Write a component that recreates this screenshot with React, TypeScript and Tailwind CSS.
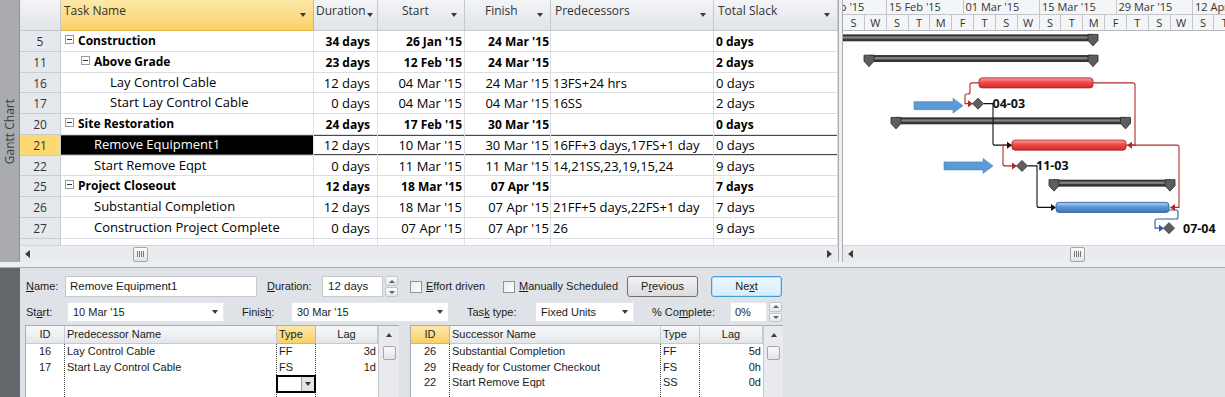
import React from "react";

type Task = {
  id: string;
  name: string;
  indent: 0 | 1 | 2;
  summary?: boolean;
  dur: string;
  start: string;
  finish: string;
  pred: string;
  slack: string;
  selected?: boolean;
};

const tasks: Task[] = [
  { id: "5", name: "Construction", indent: 0, summary: true, dur: "34 days", start: "26 Jan '15", finish: "24 Mar '15", pred: "", slack: "0 days" },
  { id: "11", name: "Above Grade", indent: 1, summary: true, dur: "23 days", start: "12 Feb '15", finish: "24 Mar '15", pred: "", slack: "2 days" },
  { id: "16", name: "Lay Control Cable", indent: 2, dur: "12 days", start: "04 Mar '15", finish: "24 Mar '15", pred: "13FS+24 hrs", slack: "0 days" },
  { id: "17", name: "Start Lay Control Cable", indent: 2, dur: "0 days", start: "04 Mar '15", finish: "04 Mar '15", pred: "16SS", slack: "2 days" },
  { id: "20", name: "Site Restoration", indent: 0, summary: true, dur: "24 days", start: "17 Feb '15", finish: "30 Mar '15", pred: "", slack: "0 days" },
  { id: "21", name: "Remove Equipment1", indent: 1, dur: "12 days", start: "10 Mar '15", finish: "30 Mar '15", pred: "16FF+3 days,17FS+1 day", slack: "0 days", selected: true },
  { id: "22", name: "Start Remove Eqpt", indent: 1, dur: "0 days", start: "11 Mar '15", finish: "11 Mar '15", pred: "14,21SS,23,19,15,24", slack: "9 days" },
  { id: "25", name: "Project Closeout", indent: 0, summary: true, dur: "12 days", start: "18 Mar '15", finish: "07 Apr '15", pred: "", slack: "7 days" },
  { id: "26", name: "Substantial Completion", indent: 1, dur: "12 days", start: "18 Mar '15", finish: "07 Apr '15", pred: "21FF+5 days,22FS+1 day", slack: "7 days" },
  { id: "27", name: "Construction Project Complete", indent: 1, dur: "0 days", start: "07 Apr '15", finish: "07 Apr '15", pred: "26", slack: "9 days" },
];

const indentPad = ["pl-[17px]", "pl-[33px]", "pl-[49px]"];

const headCols = [
  { w: "w-[253px]", label: "Task Name", pad: "pl-[3px]", yellow: true },
  { w: "w-[64px]", label: "Duration", pad: "pl-[2px]", inline: true },
  { w: "w-[87px]", label: "Start", pad: "pl-[24px]" },
  { w: "w-[86px]", label: "Finish", pad: "pl-[20px]" },
  { w: "w-[163px]", label: "Predecessors", pad: "pl-[4px]" },
  { w: "w-[124px]", label: "Total Slack", pad: "pl-[4px]" },
];

const majorTicks = ["01 Feb '15", "15 Feb '15", "01 Mar '15", "15 Mar '15", "29 Mar '15", "12 Apr '15"];
const minorTicks = ["S", "W", "S", "T", "M", "F", "T", "S", "W", "S", "T", "M", "F", "T", "S", "W", "S", "T"];

const DownArrow = () => (
  <span className="h-0 w-0 border-x-[3.5px] border-t-[4px] border-x-transparent border-t-[#3a3a3a]" />
);

function ViewBar() {
  return (
    <div className="flex w-[20px] shrink-0 justify-center border-r border-[#8e9196] bg-[#a9abae]">
      <span className="mt-[99px] h-fit rotate-180 text-[12px] text-[#3b3b3b] [writing-mode:vertical-rl]">
        Gantt Chart
      </span>
    </div>
  );
}

function HScroll({ thumbOffset, rightArrow }: { thumbOffset: string; rightArrow?: boolean }) {
  return (
    <div className="flex h-[17px] shrink-0 items-center border-t border-[#d3d6da] bg-[#e9ebee]">
      <span className="ml-[5px] h-0 w-0 border-y-[4px] border-r-[5px] border-y-transparent border-r-[#3a3a3a]" />
      <div className={`${thumbOffset} flex h-[15px] w-[15px] items-center justify-center gap-[1px] rounded-[2px] border border-[#a3a7ac] bg-gradient-to-b from-[#fbfbfb] to-[#e2e4e7]`}>
        <span className="h-[6px] w-px bg-[#777]" />
        <span className="h-[6px] w-px bg-[#777]" />
        <span className="h-[6px] w-px bg-[#777]" />
        <span className="h-[6px] w-px bg-[#777]" />
      </div>
      {rightArrow && (
        <span className="ml-auto mr-[6px] h-0 w-0 border-y-[4px] border-l-[5px] border-y-transparent border-l-[#3a3a3a]" />
      )}
    </div>
  );
}

function TaskRow({ t }: { t?: Task }) {
  const sel = t?.selected;
  const txt = t?.summary ? "font-bold text-[12px]" : "text-[13px]";
  const line = sel ? "shadow-[inset_0_1px_0_#4a4a4a,inset_0_-1px_0_#4a4a4a]" : "";
  const cell = `shrink-0 border-b border-r border-[#dcdee1] leading-[21.5px] whitespace-nowrap overflow-hidden ${line}`;
  return (
    <div className="flex h-[20.75px] shrink-0">
      <div className={`w-[41px] shrink-0 border-b border-r border-[#c9ccd0] text-center text-[12px] leading-[21.5px] text-[#333] ${sel ? "bg-[#fcd971]" : "bg-[#e5e8ec]"}`}>
        {t?.id}
      </div>
      <div className={`w-[253px] ${cell} flex items-center ${t ? indentPad[t.indent] : ""} ${txt} ${sel ? "bg-black text-white" : "bg-white text-black"}`}>
        {t?.summary && (
          <span className="-ml-[13px] mr-[4px] -mt-[3px] flex h-[9px] w-[9px] items-center justify-center border border-[#9a9a9a] bg-white">
            <span className="h-px w-[5px] bg-[#333]" />
          </span>
        )}
        {t?.name}
      </div>
      <div className={`w-[64px] ${cell} bg-white pr-[7px] text-right ${txt}`}>{t?.dur}</div>
      <div className={`w-[87px] ${cell} bg-white pr-[2px] text-right ${txt}`}>{t?.start}</div>
      <div className={`w-[86px] ${cell} bg-white pr-[1px] text-right ${txt}`}>{t?.finish}</div>
      <div className={`w-[163px] ${cell} bg-white pl-[2px] text-[13px]`}>{t?.pred}</div>
      <div className={`w-[124px] ${cell} bg-white pl-[2px] ${txt}`}>{t?.slack}</div>
    </div>
  );
}

function TaskTable() {
  return (
    <div className="flex w-[818px] shrink-0 flex-col">
      <div className="flex h-[31px] shrink-0 text-[12px] text-[#333]">
        <div className="w-[41px] shrink-0 border-b border-r border-[#c6c9cd] bg-gradient-to-b from-[#f3f4f6] to-[#e1e4e8]" />
        {headCols.map((c) => (
          <div
            key={c.label}
            className={`${c.w} ${c.pad} flex shrink-0 items-start pr-[7px] pt-[3px] border-b border-r ${
              c.yellow
                ? "border-[#e2b347] bg-gradient-to-b from-[#fde9a6] to-[#f9d068]"
                : "border-[#c6c9cd] bg-gradient-to-b from-[#f3f4f6] to-[#e1e4e8]"
            }`}
          >
            <span className="leading-[16px]">{c.label}</span>
            {!c.inline && <span className="flex-1" />}
            <span className={`mt-[10px] flex ${c.inline ? "ml-[1px]" : ""}`}>
              <DownArrow />
            </span>
          </div>
        ))}
      </div>
      <div className="flex flex-1 flex-col overflow-hidden bg-white">
        {tasks.map((t) => (
          <TaskRow key={t.id} t={t} />
        ))}
        <TaskRow />
      </div>
      <HScroll thumbOffset="ml-[103px]" rightArrow />
    </div>
  );
}

const rowY = (i: number) => 31 + 20.75 * i + 10.375;

function SummaryBar({ x1, x2, cy, leftCap = true }: { x1: number; x2: number; cy: number; leftCap?: boolean }) {
  const cap = (c: number) => (
    <polygon
      points={`${c - 5},${cy - 7} ${c + 5},${cy - 7} ${c + 5},${cy - 1} ${c},${cy + 4.5} ${c - 5},${cy - 1}`}
      fill="#5e5e5e"
      stroke="#262626"
      strokeWidth={0.8}
    />
  );
  return (
    <g>
      <rect x={x1} y={cy - 6.5} width={x2 - x1} height={6} fill="#3a3a3a" stroke="#1e1e1e" strokeWidth={0.8} />
      <rect x={x1} y={cy - 5} width={x2 - x1} height={2.2} fill="#858585" />
      {leftCap && cap(x1)}
      {cap(x2)}
    </g>
  );
}

function TaskBar({ x1, x2, cy, color }: { x1: number; x2: number; cy: number; color: "red" | "blue" }) {
  return (
    <rect
      x={x1}
      y={cy - 5}
      width={x2 - x1}
      height={10}
      rx={3}
      fill={color === "red" ? "url(#gRed)" : "url(#gBlue)"}
      stroke={color === "red" ? "#a82828" : "#2f5d98"}
      strokeWidth={0.9}
    />
  );
}

function Milestone({ cx, cy, label, gap }: { cx: number; cy: number; label: string; gap: number }) {
  return (
    <g>
      <polygon points={`${cx},${cy - 5.5} ${cx + 5.5},${cy} ${cx},${cy + 5.5} ${cx - 5.5},${cy}`} fill="#5f5f5f" stroke="#2e2e2e" strokeWidth={0.8} />
      <text x={cx + gap} y={cy + 4.5} fontSize={12.5} fontWeight={700} fill="#111" fontFamily="'Open Sans', sans-serif">
        {label}
      </text>
    </g>
  );
}

function BlueArrow({ x1, x2, cy }: { x1: number; x2: number; cy: number }) {
  const h = x2 - 10;
  return (
    <polygon
      points={`${x1},${cy - 4} ${h},${cy - 4} ${h},${cy - 7.5} ${x2},${cy} ${h},${cy + 7.5} ${h},${cy + 4} ${x1},${cy + 4}`}
      fill="#5b9bd5"
      stroke="#4a84bd"
      strokeWidth={0.6}
    />
  );
}

const headR = (x: number, y: number, c: string) => (
  <polygon points={`${x - 5},${y - 3.5} ${x},${y} ${x - 5},${y + 3.5}`} fill={c} />
);
const headL = (x: number, y: number, c: string) => (
  <polygon points={`${x + 5},${y - 3.5} ${x},${y} ${x + 5},${y + 3.5}`} fill={c} />
);

function GanttPane() {
  const red = "#b02a2a";
  const blue = "#2d5ea8";
  return (
    <div className="flex w-[382px] shrink-0 flex-col">
      <div className="flex h-[31px] shrink-0 flex-col border-b border-[#b4b8bd] bg-[#f4f5f7] text-[11px] text-[#333]">
        <div className="flex h-[15px] shrink-0 overflow-hidden border-b border-[#c3c6ca]">
          {majorTicks.map((m, i) => (
            <div
              key={m}
              className={`w-[76.5px] shrink-0 whitespace-nowrap border-r border-[#c3c6ca] pl-[2px] leading-[14px] ${i === 0 ? "-ml-[32.5px]" : ""}`}
            >
              {m}
            </div>
          ))}
        </div>
        <div className="flex h-[15px] shrink-0 overflow-hidden">
          {minorTicks.map((d, i) => (
            <div key={i} className="w-[21.857px] shrink-0 border-r border-[#c3c6ca] text-center leading-[15px]">
              {d}
            </div>
          ))}
        </div>
      </div>
      <svg width={382} height={214} viewBox="843 31 382 214" className="block shrink-0 bg-white">
        <defs>
          <linearGradient id="gRed" x1="0" y1="0" x2="0" y2="1">
            <stop offset="0" stopColor="#ff9c9c" />
            <stop offset="0.45" stopColor="#f04a4a" />
            <stop offset="1" stopColor="#d02a2a" />
          </linearGradient>
          <linearGradient id="gBlue" x1="0" y1="0" x2="0" y2="1">
            <stop offset="0" stopColor="#b3d2f3" />
            <stop offset="0.45" stopColor="#5f98da" />
            <stop offset="1" stopColor="#3e74b9" />
          </linearGradient>
        </defs>

        <SummaryBar x1={843} x2={1093} cy={rowY(0)} leftCap={false} />
        <SummaryBar x1={869} x2={1093} cy={rowY(1)} />
        <SummaryBar x1={896} x2={1125.5} cy={rowY(4)} />
        <SummaryBar x1={1054} x2={1170} cy={rowY(7)} />

        <g fill="none" strokeWidth={1.1}>
          <path d={`M979,${rowY(2)} H972 Q970,${rowY(2)} 970,${rowY(2) + 2} V92 Q970,94 968,94 H967 Q965,94 965,96 V${rowY(3)} H968`} stroke={red} />
          <path d={`M1093,${rowY(2)} H1133 Q1135,${rowY(2)} 1135,${rowY(2) + 2} V${rowY(5)} H1131`} stroke={red} />
          <path d={`M983.5,${rowY(3)} H993 V${rowY(5) - 2} Q993,${rowY(5)} 995,${rowY(5)} H1007`} stroke="#111" />
          <path d={`M1012,${rowY(5)} H1003 V${rowY(6) - 2} Q1003,${rowY(6)} 1005,${rowY(6)} H1012`} stroke={red} />
          <path d={`M1126,${rowY(5)} H1177 Q1179,${rowY(5)} 1179,${rowY(5) + 2} V${rowY(8)} H1174`} stroke={red} />
          <path d={`M1027.5,${rowY(6)} H1037 V${rowY(8) - 2} Q1037,${rowY(8)} 1039,${rowY(8)} H1051`} stroke="#111" />
          <path d={`M1169,210 H1176 Q1178,210 1178,212 V217 Q1178,219 1176,219 H1157 Q1155,219 1155,221 V${rowY(9)} H1159`} stroke={blue} />
        </g>
        {headR(973, rowY(3), red)}
        {headL(1127, rowY(5), red)}
        {headR(1012, rowY(5), "#111")}
        {headR(1017, rowY(6), red)}
        {headL(1170, rowY(8), red)}
        {headR(1056, rowY(8), "#111")}
        {headR(1164, rowY(9), blue)}

        <TaskBar x1={979} x2={1093} cy={rowY(2)} color="red" />
        <TaskBar x1={1012} x2={1126} cy={rowY(5)} color="red" />
        <TaskBar x1={1056} x2={1169} cy={rowY(8)} color="blue" />

        <BlueArrow x1={914} x2={963} cy={rowY(3) + 2} />
        <BlueArrow x1={944} x2={993} cy={rowY(6)} />

        <Milestone cx={978} cy={rowY(3)} label="04-03" gap={14.5} />
        <Milestone cx={1022} cy={rowY(6)} label="11-03" gap={14} />
        <Milestone cx={1169} cy={rowY(9)} label="07-04" gap={14} />
      </svg>
      <HScroll thumbOffset="ml-[217px]" />
    </div>
  );
}

function Spinner({ h }: { h: string }) {
  return (
    <div className={`ml-[2px] flex ${h} w-[13px] shrink-0 flex-col gap-[1px]`}>
      <div className="flex flex-1 items-center justify-center rounded-[2px] border border-[#c3c6ca] bg-gradient-to-b from-[#fdfdfd] to-[#e4e7ea]">
        <span className="h-0 w-0 border-x-[3px] border-b-[3px] border-x-transparent border-b-[#4d6480]" />
      </div>
      <div className="flex flex-1 items-center justify-center rounded-[2px] border border-[#c3c6ca] bg-gradient-to-b from-[#fdfdfd] to-[#e4e7ea]">
        <span className="h-0 w-0 border-x-[3px] border-t-[3px] border-x-transparent border-t-[#4d6480]" />
      </div>
    </div>
  );
}

function Check({ children }: { children: React.ReactNode }) {
  return (
    <>
      <span className="h-[12px] w-[12px] shrink-0 border border-[#8f9296] bg-gradient-to-br from-[#e9eaec] to-white" />
      <span className="ml-[4px]">{children}</span>
    </>
  );
}

function Combo({ w, value }: { w: string; value: string }) {
  return (
    <div className={`${w} flex h-[20px] shrink-0 items-center justify-between border border-[#e4e6e9] bg-white pl-[5px] pr-[5px]`}>
      <span>{value}</span>
      <DownArrow />
    </div>
  );
}

type LinkRow = { id: string; name: string; type: string; lag: string };

function LinkTable({ side, rows }: { side: "pred" | "succ"; rows: LinkRow[] }) {
  const cols =
    side === "pred"
      ? ["w-[39px]", "w-[212px]", "w-[39px]", "w-[62px]"]
      : ["w-[39px]", "w-[211px]", "w-[39px]", "w-[63px]"];
  const yellowCol = side === "pred" ? 2 : 0;
  const heads = ["ID", side === "pred" ? "Predecessor Name" : "Successor Name", "Type", "Lag"];
  const headAlign = ["justify-center", "pl-[2px]", "pl-[2px]", "justify-center"];
  const bodyAlign = ["text-center", "pl-[2px]", "pl-[2px]", "text-right pr-[2px]"];
  const val = (r: LinkRow, i: number) => [r.id, r.name, r.type, r.lag][i];
  return (
    <div className="flex h-[72px] shrink-0 border-l border-t border-[#a9adb2]">
      {cols.map((w, ci) => (
        <div key={ci} className={`${w} flex shrink-0 flex-col`}>
          <div
            className={`flex h-[18px] shrink-0 items-center border-b border-r ${headAlign[ci]} ${
              ci === yellowCol
                ? "border-[#e2b347] bg-gradient-to-b from-[#fde9a6] to-[#f9d068]"
                : "border-[#c6c9cd] bg-gradient-to-b from-[#f7f8f9] to-[#e4e7ea]"
            }`}
          >
            {heads[ci]}
          </div>
          <div className={`flex flex-1 flex-col bg-white ${ci < 3 ? "border-r border-dotted border-[#444]" : ""}`}>
            {rows.map((r) => (
              <div key={r.id} className={`h-[15.5px] shrink-0 whitespace-nowrap leading-[15px] ${bodyAlign[ci]}`}>
                {val(r, ci)}
              </div>
            ))}
            {side === "pred" && ci === 2 && (
              <div className="-ml-px flex h-[18px] w-[40px] shrink-0 items-stretch justify-end border-2 border-black bg-white">
                <span className="flex w-[13px] items-center justify-center border-l border-[#9a9a9a] bg-[#e3e4e6]">
                  <DownArrow />
                </span>
              </div>
            )}
          </div>
        </div>
      ))}
      <div className={`flex ${side === "pred" ? "w-[21px]" : "w-[20px]"} shrink-0 flex-col items-center border-l border-[#c6c9cd] bg-[#e8eaed]`}>
        <span className="mt-[7px] h-0 w-0 border-x-[3.5px] border-b-[4px] border-x-transparent border-b-[#3a3a3a]" />
        <span className="mt-[9px] h-[14px] w-[13px] rounded-[2px] border border-[#a3a7ac] bg-gradient-to-b from-[#fbfbfb] to-[#e2e4e7]" />
      </div>
    </div>
  );
}

function TaskForm() {
  return (
    <div className="flex flex-1 bg-[#dfe3e8]">
      <div className="w-[20px] shrink-0 bg-[#63676c]" />
      <div className="flex flex-col pl-[5px] pt-[8px] font-['Liberation_Sans',Arial,sans-serif] text-[11px] text-[#1b1b1b]">
        <div className="flex h-[21px] items-center">
          <span className="w-[40px] shrink-0 pl-[1px]">
            <u>N</u>ame:
          </span>
          <div className="flex h-[21px] w-[192px] shrink-0 items-center border border-[#c6c9cd] bg-white pl-[4px] text-[11.5px]">
            Remove Equipment1
          </div>
          <span className="w-[65px] shrink-0 pl-[10px]">
            <u>D</u>uration:
          </span>
          <div className="flex h-[21px] w-[61px] shrink-0 items-center border border-[#c6c9cd] bg-white pl-[5px] text-[11.5px]">
            12 days
          </div>
          <Spinner h="h-[21px]" />
          <div className="ml-[12px] flex w-[93px] shrink-0 items-center">
            <Check>
              <u>E</u>ffort driven
            </Check>
          </div>
          <div className="flex w-[124px] shrink-0 items-center">
            <Check>
              <u>M</u>anually Scheduled
            </Check>
          </div>
          <button className="flex h-[21px] w-[71px] shrink-0 items-center justify-center rounded-[3px] border border-[#707070] bg-gradient-to-b from-[#f3f3f3] to-[#dcdcdc]">
            P<u>r</u>evious
          </button>
          <button className="ml-[13px] flex h-[21px] w-[71px] shrink-0 items-center justify-center rounded-[3px] border border-[#3c9fdc] bg-gradient-to-b from-[#eef7fd] to-[#d7edfb] shadow-[inset_0_0_0_1px_#b8e0f7]">
            Ne<u>x</u>t
          </button>
        </div>
        <div className="mt-[5px] flex h-[20px] items-center">
          <span className="w-[42px] shrink-0 pl-[1px]">
            St<u>a</u>rt:
          </span>
          <Combo w="w-[157px]" value="10 Mar '15" />
          <span className="w-[67px] shrink-0 pl-[18px]">
            Finis<u>h</u>:
          </span>
          <Combo w="w-[158px]" value="30 Mar '15" />
          <span className="w-[86px] shrink-0 pl-[18px]">
            Tas<u>k</u> type:
          </span>
          <Combo w="w-[99px]" value="Fixed Units" />
          <span className="w-[96px] shrink-0 pl-[18px]">
            % Co<u>m</u>plete:
          </span>
          <div className="flex h-[20px] w-[37px] shrink-0 items-center border border-[#e4e6e9] bg-white pl-[4px]">0%</div>
          <Spinner h="h-[20px]" />
        </div>
        <div className="mt-[3px] flex gap-[11px]">
          <LinkTable
            side="pred"
            rows={[
              { id: "16", name: "Lay Control Cable", type: "FF", lag: "3d" },
              { id: "17", name: "Start Lay Control Cable", type: "FS", lag: "1d" },
            ]}
          />
          <LinkTable
            side="succ"
            rows={[
              { id: "26", name: "Substantial Completion", type: "FF", lag: "5d" },
              { id: "29", name: "Ready for Customer Checkout", type: "FS", lag: "0h" },
              { id: "22", name: "Start Remove Eqpt", type: "SS", lag: "0d" },
            ]}
          />
        </div>
      </div>
    </div>
  );
}

export default function App() {
  return (
    <div className="flex h-[397px] w-[1225px] flex-col overflow-hidden bg-[#dfe3e8] font-['Open_Sans',sans-serif]">
      <div className="flex h-[262px] shrink-0">
        <ViewBar />
        <TaskTable />
        <div className="w-[5px] shrink-0 border-x border-[#a9adb2] bg-[#eef0f3]" />
        <GanttPane />
      </div>
      <div className="h-[6px] shrink-0 border-b border-[#a9adb2] bg-[#eceef1]" />
      <TaskForm />
    </div>
  );
}
